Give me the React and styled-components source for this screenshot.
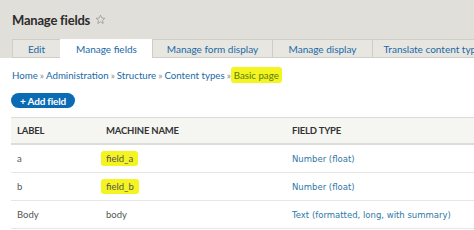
import React from "react";
import styled, { createGlobalStyle } from "styled-components";

const GlobalStyle = createGlobalStyle`
  html, body {
    margin: 0;
    padding: 0;
    background: #fff;
    overflow: hidden;
  }
  body {
    font-family: Lato, "Open Sans", sans-serif;
    color: #333;
  }
`;

const Page = styled.div`
  width: 474px;
  height: 230px;
  overflow: hidden;
`;

const Header = styled.div`
  background: #e1dfd9;
  padding: 12px 0 0 12px;
`;

const Title = styled.h1`
  margin: 0;
  display: flex;
  align-items: center;
  gap: 5px;
  font-family: Lato, "Open Sans", sans-serif;
  font-size: 13px;
  font-weight: bold;
  color: #2b2b2b;
  height: 16px;
  letter-spacing: -0.2px;
`;

const Star = styled.svg`
  width: 11px;
  height: 11px;
  margin-top: -1px;
`;

const Tabs = styled.div`
  display: flex;
  margin-top: 11px;
  white-space: nowrap;
`;

const Tab = styled.div`
  flex: 0 0 ${(p) => p.w}px;
  height: 19px;
  box-sizing: border-box;
  display: flex;
  align-items: center;
  justify-content: center;
  font-size: 10px;
  color: #1a6aa6;
  background: ${(p) => (p.active ? "#fff" : "#e8e6e1")};
  border-top: 1px solid ${(p) => (p.active ? "#fff" : "#cfcdc5")};
  border-left: 1px solid ${(p) => (p.active ? "#fff" : "#cfcdc5")};
  border-bottom: 1px solid ${(p) => (p.active ? "#fff" : "#cfcdc5")};
  overflow: hidden;
`;

const Body = styled.div`
  padding: 0 0 0 11px;
`;

const Crumbs = styled.div`
  margin-top: 10px;
  padding-left: 1px;
  font-size: 9.7px;
  color: #1a6aa6;
  height: 14px;
  display: flex;
  align-items: center;
  white-space: nowrap;
`;

const Sep = styled.span`
  color: #888;
  margin: 0 2px;
`;

const Mark = styled.span`
  background: #f4f420;
  border-radius: 3px;
  padding: 2px 3px;
  margin-left: -2px;
  color: #5a7a10;
`;

const AddButton = styled.button`
  margin-top: 11px;
  width: 64px;
  height: 15px;
  border: none;
  border-radius: 8px;
  background: #0a6ab3;
  color: #fff;
  font-family: Lato, "Open Sans", sans-serif;
  font-size: 10px;
  font-weight: bold;
  padding: 0;
  letter-spacing: -0.2px;
`;

const Table = styled.div`
  margin-top: 9px;
  font-family: Lato, "Open Sans", sans-serif;
  font-size: 9.5px;
  color: #444;
`;

const Row = styled.div`
  display: grid;
  grid-template-columns: 89px 186px 1fr;
  align-items: center;
  height: ${(p) => (p.head ? 25 : 27)}px;
  padding-left: 6px;
  background: ${(p) => (p.head ? "#f5f5f2" : "#fff")};
  border-top: ${(p) => (p.head ? "1px solid #dcdcd8" : "none")};
  border-bottom: ${(p) => (p.head ? "2px solid #dcdcd8" : "1px solid #e6e6e3")};
  font-weight: ${(p) => (p.head ? 700 : 400)};
  color: ${(p) => (p.head ? "#333" : "#555")};
  letter-spacing: ${(p) => (p.head ? "-0.2px" : "0")};
`;

const Cell = styled.div`
  white-space: nowrap;
`;

const TypeLink = styled.span`
  color: #2f78a6;
  font-family: "DejaVu Sans", Verdana, sans-serif;
  font-size: 8.5px;
`;

const Hl = styled.span`
  background: #f4f420;
  border-radius: 3px;
  padding: 2px 5px;
  margin-left: -5px;
`;

const tabs = [
  { label: "Edit", w: 48 },
  { label: "Manage fields", w: 92, active: true },
  { label: "Manage form display", w: 120 },
  { label: "Manage display", w: 100 },
  { label: "Translate content type", w: 120 },
];

const rows = [
  { label: "a", machine: "field_a", hl: true, type: "Number (float)" },
  { label: "b", machine: "field_b", hl: true, type: "Number (float)" },
  { label: "Body", machine: "body", type: "Text (formatted, long, with summary)" },
];

export default function App() {
  return (
    <Page>
      <GlobalStyle />
      <Header>
        <Title>
          Manage fields
          <Star viewBox="0 0 24 24">
            <path
              d="M12 2.5l2.9 6.2 6.6.7-5 4.5 1.4 6.6L12 17.2l-5.9 3.3 1.4-6.6-5-4.5 6.6-.7z"
              fill="none"
              stroke="#9a9a94"
              strokeWidth="1.8"
              strokeLinejoin="round"
            />
          </Star>
        </Title>
        <Tabs>
          {tabs.map((t) => (
            <Tab key={t.label} w={t.w} active={t.active}>
              {t.label}
            </Tab>
          ))}
        </Tabs>
      </Header>
      <Body>
        <Crumbs>
          Home<Sep>»</Sep>Administration<Sep>»</Sep>Structure<Sep>»</Sep>Content
          types<Sep>»</Sep>
          <Mark>Basic page</Mark>
        </Crumbs>
        <AddButton>+ Add field</AddButton>
        <Table>
          <Row head>
            <Cell>LABEL</Cell>
            <Cell>MACHINE NAME</Cell>
            <Cell>FIELD TYPE</Cell>
          </Row>
          {rows.map((r) => (
            <Row key={r.label}>
              <Cell>{r.label}</Cell>
              <Cell>{r.hl ? <Hl>{r.machine}</Hl> : r.machine}</Cell>
              <Cell>
                <TypeLink>{r.type}</TypeLink>
              </Cell>
            </Row>
          ))}
        </Table>
      </Body>
    </Page>
  );
}
